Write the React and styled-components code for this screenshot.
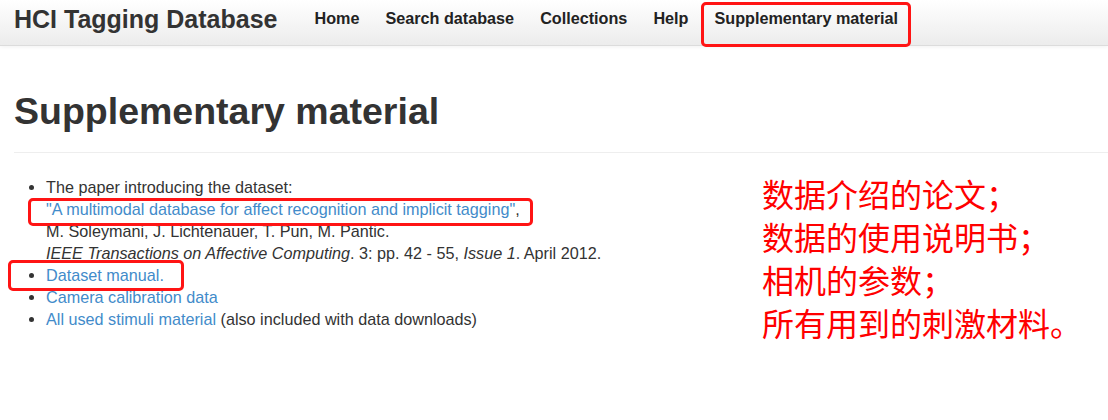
import React from 'react'
import styled, { createGlobalStyle } from 'styled-components'

const Global = createGlobalStyle`
  html, body {
    margin: 0;
    padding: 0;
    background: #fff;
  }
  body {
    font-family: "Liberation Sans", Arial, sans-serif;
    font-size: 16px;
    line-height: 22px;
    color: #333;
  }
`

const navItems = ['Home', 'Search database', 'Collections', 'Help', 'Supplementary material']

function App() {
  return (
    <>
      <Global />
      <page.Navbar>
        <page.Brand>HCI Tagging Database</page.Brand>
        <page.Nav>
          {navItems.map((item) => (
            <page.NavLink key={item} $marked={item === 'Supplementary material'}>
              {item}
            </page.NavLink>
          ))}
        </page.Nav>
      </page.Navbar>

      <page.Container>
        <page.Header>
          <page.Title>Supplementary material</page.Title>
        </page.Header>

        <page.Body>
          <page.List>
            <li>
              The paper introducing the dataset:
              <br />
              <page.Marked $l={-18} $r={-13} $t={0} $b={-6}>
                <page.Link>"A multimodal database for affect recognition and implicit tagging"</page.Link>,
              </page.Marked>
              <br />
              M. Soleymani, J. Lichtenauer, T. Pun, M. Pantic.
              <br />
              <i>IEEE Transactions on Affective Computing</i>. 3: pp. 42 - 55, <i>Issue 1</i>. April 2012.
            </li>
            <li>
              <page.Marked $l={-38} $r={-20} $t={-4} $b={-5}>
                <page.Link>Dataset manual.</page.Link>
              </page.Marked>
            </li>
            <li>
              <page.Link>Camera calibration data</page.Link>
            </li>
            <li>
              <page.Link>All used stimuli material</page.Link> (also included with data downloads)
            </li>
          </page.List>

          <page.Note>
            数据介绍的论文；
            <br />
            数据的使用说明书；
            <br />
            相机的参数；
            <br />
            所有用到的刺激材料。
          </page.Note>
        </page.Body>
      </page.Container>
    </>
  )
}

const redBox = `
  content: "";
  position: absolute;
  border: 3px solid #ff1414;
  border-radius: 5px;
  pointer-events: none;
`

const page = {
  Navbar: styled.nav`
    display: flex;
    align-items: flex-start;
    height: 45px;
    background: linear-gradient(to bottom, #ffffff 0%, #ececec 100%);
    border-bottom: 1px solid #dcdcdc;
    box-shadow: 0 1px 4px rgba(0, 0, 0, 0.06);
  `,

  Brand: styled.a`
    padding: 5px 0 0 14px;
    font-size: 25px;
    line-height: 28px;
    font-weight: bold;
    color: #333;
    white-space: nowrap;
  `,

  Nav: styled.div`
    display: flex;
    margin-left: 24px;
    height: 100%;
  `,

  NavLink: styled.a`
    position: relative;
    padding: 8px 13px 0;
    font-size: 16.2px;
    line-height: 20px;
    font-weight: bold;
    color: #222;
    white-space: nowrap;
    ${(p) =>
      p.$marked &&
      `
      &::after {
        ${redBox}
        left: 0;
        right: 0;
        top: 2px;
        bottom: -2px;
      }
    `}
  `,

  Container: styled.main`
    padding: 0 0 0 14px;
  `,

  Header: styled.div`
    margin: 44px 0 23px;
    padding-bottom: 20px;
    border-bottom: 1px solid #eee;
  `,

  Title: styled.h1`
    margin: 0;
    font-size: 37.5px;
    line-height: 42px;
    font-weight: bold;
    color: #333;
  `,

  Body: styled.section`
    display: flex;
    align-items: flex-start;
  `,

  List: styled.ul`
    flex: 0 0 748px;
    margin: 0;
    padding-left: 32px;
    box-sizing: border-box;
    font-size: 16.2px;
    line-height: 22px;
  `,

  Link: styled.a`
    color: #428bca;
    text-decoration: none;
    cursor: pointer;
  `,

  Marked: styled.span`
    position: relative;
    display: inline-block;
    &::after {
      ${redBox}
      left: ${(p) => p.$l}px;
      right: ${(p) => p.$r}px;
      top: ${(p) => p.$t}px;
      bottom: ${(p) => p.$b}px;
    }
  `,

  Note: styled.div`
    margin-top: -4px;
    font-family: "Noto Sans CJK SC", "Noto Sans", sans-serif;
    font-size: 32px;
    line-height: 43px;
    color: #ff0000;
    white-space: nowrap;
  `,
}

export default App
